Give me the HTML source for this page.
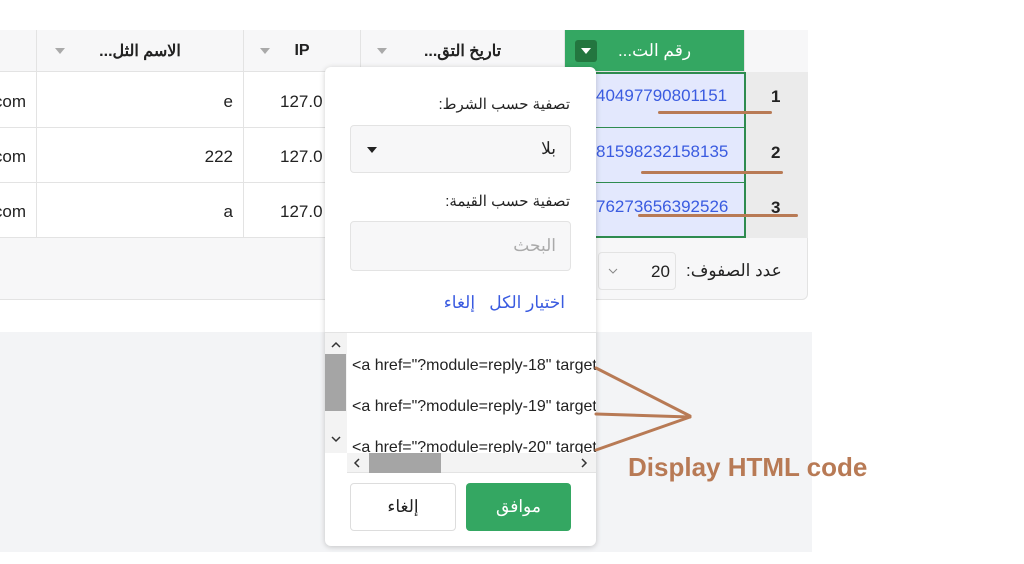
<!DOCTYPE html>
<html><head><meta charset="utf-8"><style>
*{box-sizing:border-box;margin:0;padding:0}
body{width:1024px;height:564px;background:#fff;position:relative;overflow:hidden;font-family:"Liberation Sans","Noto Sans CJK SC",sans-serif;color:#222}
.a{position:absolute}
.hd{background:#f7f7f8;border-right:1px solid #e3e3e3;border-bottom:1px solid #e3e3e3;height:42px;top:30px;font-weight:bold;font-size:16px;display:flex;align-items:center;justify-content:center;direction:rtl}
.tri{position:absolute;width:0;height:0;border-left:5px solid transparent;border-right:5px solid transparent;border-top:6px solid #aaa}
.cell{border-right:1px solid #e3e3e3;border-bottom:1px solid #e3e3e3;font-size:17px;display:flex;align-items:center;padding:0 10px;padding-top:4px}
.ln{position:absolute;height:3px;background:#b87a55;border-radius:2px}
.num{position:absolute;color:#3a5be0;font-size:17px}
</style></head><body>
<div class="a" style="left:0;top:30px;width:808px;height:270px;border:1px solid #e3e3e3;border-left:none;border-radius:0 6px 6px 0;background:#f7f7f8"></div>
<div class="a hd" style="left:0;width:37px"></div>
<div class="a hd" style="left:37px;width:207px">الاسم الثل...<span class="tri" style="left:18px;top:18px"></span></div>
<div class="a hd" style="left:244px;width:117px">IP<span class="tri" style="left:16px;top:18px"></span></div>
<div class="a hd" style="left:361px;width:204px">تاريخ التق...<span class="tri" style="left:16px;top:18px"></span></div>
<div class="a hd" style="left:565px;width:180px;background:#34a762;color:#fff;top:30px;height:42px;font-weight:normal;font-size:17px">رقم الت...<span class="a" style="left:10px;top:10px;width:22px;height:22px;background:#23763f;border-radius:3px"><span class="tri" style="left:6px;top:8px;border-top-color:#fff"></span></span></div>
<div class="a" style="left:745px;top:30px;width:63px;height:42px;background:#f7f7f8"></div>
<div class="a" style="left:0;top:72px;width:745px;height:166px;background:#fff"></div>
<div class="a" style="left:745px;top:72px;width:63px;height:166px;background:#ebebeb"></div>
<div class="a cell" style="left:0;top:72px;width:37px;height:56px;padding-left:0;padding-right:10px;justify-content:flex-end;overflow:hidden">com</div>
<div class="a cell" style="left:0;top:128px;width:37px;height:55px;padding-left:0;padding-right:10px;justify-content:flex-end;overflow:hidden">com</div>
<div class="a cell" style="left:0;top:183px;width:37px;height:55px;padding-left:0;padding-right:10px;justify-content:flex-end;overflow:hidden">com</div>
<div class="a cell" style="left:37px;top:72px;width:207px;height:56px;justify-content:flex-end">e</div>
<div class="a cell" style="left:37px;top:128px;width:207px;height:55px;justify-content:flex-end">222</div>
<div class="a cell" style="left:37px;top:183px;width:207px;height:55px;justify-content:flex-end">a</div>
<div class="a cell" style="left:244px;top:72px;width:117px;height:56px;padding-left:36px">127.0</div>
<div class="a cell" style="left:244px;top:128px;width:117px;height:55px;padding-left:36px">127.0</div>
<div class="a cell" style="left:244px;top:183px;width:117px;height:55px;padding-left:36px">127.0</div>
<div class="a" style="left:565px;top:72px;width:181px;height:166px;background:#e3e8fd;border:2px solid #2e8b4f"></div>
<div class="a" style="left:565px;top:127px;width:181px;height:1px;background:#2e8b4f"></div>
<div class="a" style="left:565px;top:182px;width:181px;height:1px;background:#2e8b4f"></div>
<div class="num" style="left:596px;top:86px">40497790801151</div>
<div class="num" style="left:596px;top:142px">81598232158135</div>
<div class="num" style="left:596px;top:197px">76273656392526</div>
<div class="a" style="left:771px;top:87px;font-weight:bold;font-size:17px">1</div>
<div class="a" style="left:771px;top:143px;font-weight:bold;font-size:17px">2</div>
<div class="a" style="left:771px;top:198px;font-weight:bold;font-size:17px">3</div>
<div class="ln" style="left:658px;top:111px;width:114px"></div>
<div class="ln" style="left:641px;top:171px;width:142px"></div>
<div class="ln" style="left:638px;top:214px;width:160px"></div>
<div class="a" style="left:598px;top:252px;width:78px;height:38px;border:1px solid #e3e3e3;border-radius:4px;background:#f7f7f8;font-size:17px"><span class="a" style="left:52px;top:9px">20</span><svg class="a" style="left:9px;top:14px" width="10" height="8"><path d="M1 2 L5 6 L9 2" stroke="#888" fill="none"/></svg></div>
<div class="a" style="left:686px;top:261px;font-size:17px;direction:rtl">عدد الصفوف:</div>
<div class="a" style="left:0;top:332px;width:812px;height:220px;background:#f3f4f6"></div>
<div class="a" style="left:628px;top:452px;font-size:26px;font-weight:bold;color:#b87a55">Display HTML code</div>
<div class="a" style="left:325px;top:67px;width:271px;height:479px;background:#fff;border-radius:6px;box-shadow:0 1px 6px rgba(0,0,0,.2);overflow:hidden">
 <div class="a" style="right:26px;top:28px;font-size:15px;direction:rtl">تصفية حسب الشرط:</div>
 <div class="a" style="left:25px;top:58px;width:221px;height:48px;background:#f7f7f8;border:1px solid #e3e3e3;border-radius:4px"><span class="tri" style="left:16px;top:21px;border-top-color:#222"></span><span class="a" style="right:14px;top:13px;font-size:17px">بلا</span></div>
 <div class="a" style="right:26px;top:125px;font-size:15px;direction:rtl">تصفية حسب القيمة:</div>
 <div class="a" style="left:25px;top:154px;width:221px;height:50px;background:#f7f7f8;border:1px solid #e3e3e3;border-radius:4px"><span class="a" style="right:14px;top:14px;font-size:17px;color:#aaa">البحث</span></div>
 <div class="a" style="right:31px;top:226px;font-size:17px;color:#3a5be0;direction:rtl">اختيار الكل&nbsp;&nbsp;&nbsp;إلغاء</div>
 <div class="a" style="left:0;top:265px;width:271px;height:1px;background:#e3e3e3"></div>
 <div class="a" style="left:0;top:266px;width:22px;height:120px;background:#f3f3f3"></div>
 <div class="a" style="left:0;top:287px;width:21px;height:57px;background:#a5a5a5"></div>
 <svg class="a" style="left:5px;top:273px" width="12" height="10"><path d="M2 7 L6 3 L10 7" stroke="#333" stroke-width="1.5" fill="none"/></svg>
 <svg class="a" style="left:5px;top:367px" width="12" height="10"><path d="M2 3 L6 7 L10 3" stroke="#333" stroke-width="1.5" fill="none"/></svg>
 <div class="a" style="left:27px;top:290px;font-size:16px;white-space:nowrap">&lt;a href="?module=reply-18" target</div>
 <div class="a" style="left:27px;top:331px;font-size:16px;white-space:nowrap">&lt;a href="?module=reply-19" target</div>
 <div class="a" style="left:27px;top:372px;font-size:16px;white-space:nowrap;height:14px;overflow:hidden">&lt;a href="?module=reply-20" target</div>
 <div class="a" style="left:22px;top:386px;width:249px;height:20px;background:#f3f3f3;border-bottom:1px solid #e3e3e3"></div>
 <div class="a" style="left:44px;top:386px;width:72px;height:20px;background:#a5a5a5"></div>
 <svg class="a" style="left:27px;top:390px" width="10" height="12"><path d="M7 2 L3 6 L7 10" stroke="#333" stroke-width="1.5" fill="none"/></svg>
 <svg class="a" style="left:254px;top:390px" width="10" height="12"><path d="M3 2 L7 6 L3 10" stroke="#333" stroke-width="1.5" fill="none"/></svg>
 <div class="a" style="left:25px;top:416px;width:106px;height:48px;border:1px solid #ddd;border-radius:4px;font-size:17px;display:flex;align-items:center;justify-content:center">إلغاء</div>
 <div class="a" style="left:141px;top:416px;width:105px;height:48px;background:#34a762;border-radius:4px;color:#fff;font-size:17px;display:flex;align-items:center;justify-content:center">موافق</div>
</div>
<svg class="a" style="left:594px;top:360px" width="100" height="100"><g stroke="#b87a55" stroke-width="3" fill="none" stroke-linecap="round"><path d="M2 8 L96 56"/><path d="M2 54 L96 57"/><path d="M2 90 L96 57"/></g></svg>
</body></html>
